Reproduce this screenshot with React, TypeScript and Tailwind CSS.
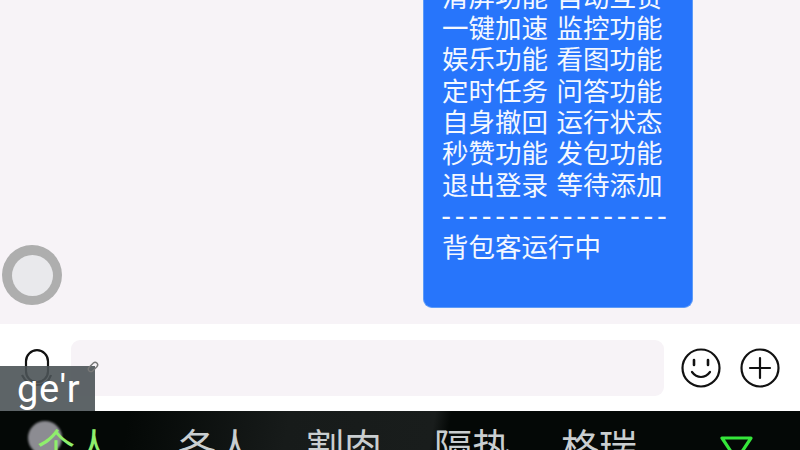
const cjk = "font-['Roboto','Noto_Sans_CJK_SC',sans-serif]"

const rows = [
  "清屏功能 自动互赞",
  "一键加速 监控功能",
  "娱乐功能 看图功能",
  "定时任务 问答功能",
  "自身撤回 运行状态",
  "秒赞功能 发包功能",
  "退出登录 等待添加",
]

const tabs = [
  { label: "各人", width: "w-[128px]" },
  { label: "割肉", width: "w-[128px]" },
  { label: "隔热", width: "w-[127px]" },
  { label: "格瑞", width: "w-[158px]" },
]

export default function App() {
  return (
    <div className={`relative flex h-[450px] w-[800px] flex-col overflow-hidden bg-white ${cjk}`}>
      {/* Chat */}
      <div className="flex h-[324px] flex-col items-end justify-end overflow-hidden bg-[#f7f3f7] pb-[16px] pr-[107px]">
        <div className="w-[270px] shrink-0 rounded-b-[9px] border-x border-b border-[#5d9bf8] bg-[#2775fb] pb-[43.5px] pl-[18px] text-[26.5px] leading-[31.3px] text-[#f4f8ff]">
          {rows.map((row) => (
            <div key={row} className="whitespace-pre [word-spacing:2px]">{row}</div>
          ))}
          <div className="h-[31.3px] whitespace-pre text-[30px] leading-[31.3px] tracking-[5.2px]">-----------------</div>
          <div>背包客运行中</div>
        </div>
      </div>

      {/* Input */}
      <div className="flex h-[87px] items-center bg-white pl-[21px] pr-[20px] pt-[1px]">
        <svg width="31" height="38" viewBox="0 0 31 38" fill="none" stroke="#111" strokeWidth="2.2" className="mr-[19px] shrink-0">
          <rect x="5" y="1.2" width="22" height="32" rx="11" />
          <path d="M1 26c3 6 8 10 15 10s12-4 14-10" />
        </svg>
        <div className="h-[56px] flex-1 rounded-[9px] bg-[#f7f3f7]" />
        <svg width="40" height="40" viewBox="0 0 40 40" fill="none" stroke="#111" strokeWidth="2.2" className="ml-[17px] shrink-0">
          <circle cx="20" cy="20" r="18.5" />
          <path d="M13 12v5M27 12v5" strokeLinecap="round" strokeWidth="2.6" />
          <path d="M11 24c3 4 6 5 9 5s6-1 9-5" strokeLinecap="round" />
        </svg>
        <svg width="40" height="40" viewBox="0 0 40 40" fill="none" stroke="#111" strokeWidth="2.2" className="ml-[19px] shrink-0">
          <circle cx="20" cy="20" r="18.5" />
          <path d="M20 10v20M10 20h20" strokeLinecap="round" />
        </svg>
      </div>

      {/* Bottom tabs, cut off by the edge of the video */}
      <div className="relative flex h-[39px] items-start overflow-hidden bg-[linear-gradient(100deg,#040806_16%,#171b1a_36%,#191d1c_54%,#040806_56%)] pl-[37px] pt-[13px] text-[38px] leading-[48px] text-[#c9ced0]">
        {/* Ball under the first tab */}
        <div className="absolute left-[28px] top-[10px] h-[34px] w-[34px] rounded-full bg-[#8c8c92] blur-[1px]" />
        <span className="relative w-[141px] shrink-0 text-[#8fee6c]">个人</span>
        {tabs.map((tab) => (
          <span key={tab.label} className={`${tab.width} shrink-0`}>{tab.label}</span>
        ))}
        <svg width="34" height="30" viewBox="0 0 34 30" fill="none" stroke="#35e63a" strokeWidth="3.2" className="mt-[11px] shrink-0">
          <path d="M3 3h29L17.5 25z" strokeLinejoin="round" />
        </svg>
      </div>

      {/* Floating ball */}
      <div className="absolute left-[2px] top-[245px] flex h-[60px] w-[60px] items-center justify-center rounded-full bg-[#aeaeae]">
        <div className="h-[41px] w-[41px] rounded-full bg-[#e9e9ec]" />
      </div>

      {/* Keyboard preview */}
      <div className="absolute left-0 top-[366px] h-[45px] w-[95px] bg-[#4b5357]/90 pl-[17px] pt-[1px] text-[38px] leading-[45px] tracking-[0.6px] text-white">
        ge'r
      </div>
      <svg width="14" height="14" viewBox="0 0 14 14" fill="none" stroke="#777" strokeWidth="1.4" className="absolute left-[86px] top-[360px]">
        <rect x="1.5" y="4.5" width="11" height="5" rx="2.5" transform="rotate(-45 7 7)" />
      </svg>
    </div>
  )
}
